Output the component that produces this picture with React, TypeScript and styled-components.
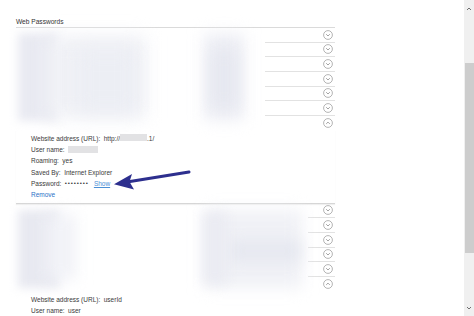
import React from "react";
import styled, { createGlobalStyle } from "styled-components";

const Global = createGlobalStyle`
  html, body { margin: 0; padding: 0; background: #ffffff; }
  body { font-family: "Liberation Sans", Arial, sans-serif; color: #3a3a3a; }
`;

const Page = styled.div`
  display: flex;
  width: 474px;
  height: 316px;
  overflow: hidden;
  background: #fff;
`;

const Main = styled.div`
  flex: 1;
  padding-left: 16px;
`;

const Column = styled.div`
  width: 319px;
`;

const Title = styled.div`
  box-sizing: border-box;
  height: 28px;
  padding-top: 16.5px;
  font-size: 6.6px;
  line-height: 9px;
  color: #303030;
  border-bottom: 1px solid #dadada;
`;

const Group = styled.div`
  position: relative;
`;

const Row = styled.div<{ $last?: boolean }>`
  box-sizing: border-box;
  height: ${(p) => (p.$last ? "14px" : "14.67px")};
  display: flex;
  align-items: center;
  justify-content: flex-end;
  border-bottom: ${(p) => (p.$last ? "none" : "1px solid #e2e2e2")};
`;

const Details = styled.div<{ $sep?: boolean }>`
  box-sizing: border-box;
  padding: 3px 0 ${(p) => (p.$sep ? "2.5px" : "0")} 15px;
  font-size: 6.5px;
  line-height: 11.2px;
  color: #3a3a3a;
  border-bottom: ${(p) => (p.$sep ? "1px solid #d6d6d6" : "none")};
  box-shadow: ${(p) => (p.$sep ? "0 1px 1px rgba(0,0,0,0.06)" : "none")};
`;

const Line = styled.div`
  display: flex;
  align-items: center;
  gap: 3.5px;
  height: 11.2px;
  white-space: nowrap;
`;

const Redacted = styled.span<{ $w: number }>`
  display: inline-block;
  width: ${(p) => p.$w}px;
  height: 7px;
  background: #e2e2e4;
  filter: blur(0.6px);
`;

const Dots = styled.span`
  letter-spacing: 0.9px;
  font-size: 6px;
  margin-right: 1.5px;
`;

const Link = styled.span<{ $light?: boolean }>`
  color: ${(p) => (p.$light ? "#4b8fd6" : "#2c72c7")};
  text-decoration: ${(p) => (p.$light ? "underline" : "none")};
`;

const Cover = styled.div<{ $top: number; $w: number; $h: number }>`
  position: absolute;
  left: 0;
  top: ${(p) => p.$top}px;
  width: ${(p) => p.$w}px;
  height: ${(p) => p.$h}px;
  background: #fff;
  pointer-events: none;
`;

const Blob = styled.div<{
  $x: number;
  $y: number;
  $w: number;
  $h: number;
  $c: string;
  $b: number;
}>`
  position: absolute;
  left: ${(p) => p.$x}px;
  top: ${(p) => p.$y}px;
  width: ${(p) => p.$w}px;
  height: ${(p) => p.$h}px;
  background: ${(p) => p.$c};
  filter: blur(${(p) => p.$b}px);
  pointer-events: none;
`;

const Pointer = styled.svg`
  position: absolute;
  left: 94px;
  top: 134px;
  pointer-events: none;
`;

const IconWrap = styled.span`
  display: flex;
  width: 10px;
  height: 10px;
  margin-right: 2px;
`;

const ScrollBar = styled.div`
  width: 10px;
  height: 316px;
  background: #f0f0f0;
  display: flex;
  flex-direction: column;
  align-items: stretch;
`;

const ScrollBtn = styled.div`
  height: 17px;
  display: flex;
  align-items: center;
  justify-content: center;
`;

const Track = styled.div`
  flex: 1;
  padding-top: 46px;
`;

const Thumb = styled.div`
  height: 190px;
  background: #cdcdcd;
  margin-left: 1px;
`;

const Chevron = ({ up }: { up?: boolean }) => (
  <IconWrap>
    <svg width="10" height="10" viewBox="0 0 10 10">
      <circle cx="5" cy="5" r="4.4" fill="#fff" stroke="#a2a2a2" strokeWidth="0.8" />
      <path
        d={up ? "M3.2 5.9 L5 4.1 L6.8 5.9" : "M3.2 4.2 L5 6 L6.8 4.2"}
        fill="none"
        stroke="#8a8a8a"
        strokeWidth="0.8"
      />
    </svg>
  </IconWrap>
);

const SmallArrow = ({ up }: { up?: boolean }) => (
  <svg width="6" height="4" viewBox="0 0 6 4">
    <path d={up ? "M1 3 L3 1 L5 3" : "M1 1 L3 3 L5 1"} fill="none" stroke="#707070" strokeWidth="1" />
  </svg>
);

const Rows = ({ n }: { n: number }) => (
  <>
    {Array.from({ length: n }).map((_, i) => (
      <Row key={i}>
        <Chevron />
      </Row>
    ))}
    <Row $last>
      <Chevron up />
    </Row>
  </>
);

export default function App() {
  return (
    <Page>
      <Global />
      <Main>
        <Column>
          <Title>Web Passwords</Title>
          <Group>
            <Rows n={6} />
            <Cover $top={2} $w={249} $h={96} />
            <Blob $x={2} $y={5} $w={40} $h={88} $c="#e9eaf2" $b={5} />
            <Blob $x={30} $y={8} $w={100} $h={82} $c="#f0f1f6" $b={9} />
            <Blob $x={62} $y={22} $w={58} $h={62} $c="#eceef4" $b={9} />
            <Blob $x={188} $y={6} $w={40} $h={86} $c="#ecedf4" $b={8} />
            <Blob $x={196} $y={24} $w={24} $h={54} $c="#e6e8f0" $b={7} />
            <Details $sep>
              <Line>
                <span>Website address (URL):</span>
                <span>
                  http://<Redacted $w={27} />.1/
                </span>
              </Line>
              <Line>
                <span>User name:</span>
                <Redacted $w={30} />
              </Line>
              <Line>
                <span>Roaming:</span>
                <span>yes</span>
              </Line>
              <Line>
                <span>Saved By:</span>
                <span>Internet Explorer</span>
              </Line>
              <Line>
                <span>Password:</span>
                <Dots>••••••••</Dots>
                <Link $light>Show</Link>
              </Line>
              <Line>
                <Link>Remove</Link>
              </Line>
            </Details>
            <Pointer width="85" height="34" viewBox="0 0 85 34">
              <line x1="79" y1="10" x2="20" y2="19.6" stroke="#2d2f8e" strokeWidth="3" strokeLinecap="round" />
              <path d="M4 22.3 L22 12 L19.5 19.8 L24 27.5 Z" fill="#2d2f8e" />
            </Pointer>
          </Group>
          <Group>
            <Rows n={5} />
            <Cover $top={2} $w={292} $h={86} />
            <Blob $x={2} $y={6} $w={42} $h={78} $c="#e8e9f1" $b={5} />
            <Blob $x={30} $y={10} $w={30} $h={66} $c="#f1f2f7" $b={8} />
            <Blob $x={188} $y={6} $w={98} $h={78} $c="#f0f1f6" $b={8} />
            <Blob $x={214} $y={36} $w={70} $h={22} $c="#e6e8f0" $b={7} />
            <Blob $x={188} $y={8} $w={22} $h={72} $c="#eaebf2" $b={6} />
            <Details>
              <Line>
                <span>Website address (URL):</span>
                <span>userId</span>
              </Line>
              <Line>
                <span>User name:</span>
                <span>user</span>
              </Line>
            </Details>
          </Group>
        </Column>
      </Main>
      <ScrollBar>
        <ScrollBtn>
          <SmallArrow up />
        </ScrollBtn>
        <Track>
          <Thumb />
        </Track>
        <ScrollBtn>
          <SmallArrow />
        </ScrollBtn>
      </ScrollBar>
    </Page>
  );
}
